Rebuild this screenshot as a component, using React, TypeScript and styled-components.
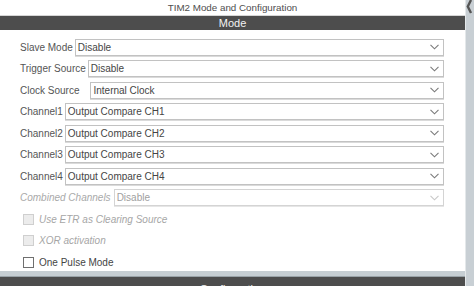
import React from "react";
import styled, { createGlobalStyle } from "styled-components";

const GlobalStyle = createGlobalStyle`
	html, body {
		margin: 0;
		padding: 0;
		height: 100%;
		overflow: hidden;
		background: #ffffff;
	}

	body {
		font-family: "Liberation Sans", Arial, sans-serif;
	}
`;

type SelectRow = {
	label: string;
	value: string;
	spacing?: number;
	disabled?: boolean;
};

type CheckRow = {
	label: string;
	disabled?: boolean;
};

const selects: SelectRow[] = [
	{ label: "Slave Mode", value: "Disable" },
	{ label: "Trigger Source", value: "Disable" },
	{ label: "Clock Source", value: "Internal Clock", spacing: 11 },
	{ label: "Channel1", value: "Output Compare CH1" },
	{ label: "Channel2", value: "Output Compare CH2" },
	{ label: "Channel3", value: "Output Compare CH3" },
	{ label: "Channel4", value: "Output Compare CH4" },
	{ label: "Combined Channels", value: "Disable", spacing: 3, disabled: true },
];

const checks: CheckRow[] = [
	{ label: "Use ETR as Clearing Source", disabled: true },
	{ label: "XOR activation", disabled: true },
	{ label: "One Pulse Mode" },
];

const Chevron = ({ light }: { light?: boolean }) => (
	<svg width="9" height="6" viewBox="0 0 9 6">
		<polyline
			points="0.5,0.8 4.5,4.8 8.5,0.8"
			fill="none"
			stroke={light ? "#c8c8c8" : "#7a7a7a"}
			strokeWidth="1.1"
		/>
	</svg>
);

const App = () => {
	return (
		<Screen>
			<GlobalStyle />
			<Panel>
				<Title>TIM2 Mode and Configuration</Title>
				<SectionBar>Mode</SectionBar>

				<Content>
					{selects.map((row) => (
						<Row key={row.label}>
							<Label $disabled={row.disabled} $spacing={row.spacing}>
								{row.label}
							</Label>
							<Select $disabled={row.disabled}>
								<span>{row.value}</span>
								<Chevron light={row.disabled} />
							</Select>
						</Row>
					))}

					{checks.map((row) => (
						<Row key={row.label}>
							<Check $disabled={row.disabled}>
								<Box $disabled={row.disabled} />
								<span>{row.label}</span>
							</Check>
						</Row>
					))}
				</Content>

				<Band />
				<SectionBar $bottom>Configuration</SectionBar>
			</Panel>

			<Splitter>
				<svg width="8" height="16" viewBox="0 0 8 16">
					<polyline
						points="5,0 1.8,6.5 5,13"
						fill="none"
						stroke="#555"
						strokeWidth="2.4"
					/>
				</svg>
			</Splitter>
		</Screen>
	);
};

const Screen = styled.div`
	display: flex;
	width: 474px;
	height: 286px;
	overflow: hidden;
`;

const Panel = styled.div`
	width: 466px;
	display: flex;
	flex-direction: column;
	background: #ffffff;
`;

const Title = styled.div`
	height: 16px;
	line-height: 15px;
	text-align: center;
	font-size: 9.8px;
	color: #4e4e4e;
`;

const SectionBar = styled.div<{ $bottom?: boolean }>`
	flex-shrink: 0;
	height: 14px;
	line-height: 14px;
	border-top: 1px solid ${({ $bottom }) => ($bottom ? "#9aa3a8" : "#d6d6d6")};
	background: #4d4d4d;
	color: #f2f2f2;
	font-size: 11px;
	text-align: center;
	padding-top: ${({ $bottom }) => ($bottom ? "5px" : "0")};
`;

const Content = styled.div`
	flex-shrink: 0;
	height: 241px;
	box-sizing: border-box;
	padding: 6.5px 21px 0 20px;
	display: flex;
	flex-direction: column;
`;

const Row = styled.div`
	flex-shrink: 0;
	height: 21.5px;
	display: flex;
	align-items: center;
`;

const Label = styled.span<{ $disabled?: boolean; $spacing?: number }>`
	font-size: 10px;
	white-space: nowrap;
	color: ${({ $disabled }) => ($disabled ? "#a9a9a9" : "#555555")};
	font-style: ${({ $disabled }) => ($disabled ? "italic" : "normal")};
	margin-right: ${({ $spacing }) => $spacing ?? 2}px;
`;

const Select = styled.div<{ $disabled?: boolean }>`
	flex: 1;
	height: 15px;
	display: flex;
	align-items: center;
	justify-content: space-between;
	padding: 0 4px 0 2px;
	border: 1px solid ${({ $disabled }) => ($disabled ? "#d4d4d4" : "#c2c2c2")};
	box-shadow: 0 1px 0 ${({ $disabled }) => ($disabled ? "#e6e6e6" : "#dadada")};
	background: #ffffff;
	font-size: 10px;
	color: ${({ $disabled }) => ($disabled ? "#a0a0a0" : "#454545")};

	span {
		white-space: nowrap;
	}
`;

const Check = styled.label<{ $disabled?: boolean }>`
	display: flex;
	align-items: center;
	gap: 5px;
	padding-left: 3px;
	font-size: 10px;
	color: ${({ $disabled }) => ($disabled ? "#a6a6a6" : "#454545")};
	font-style: ${({ $disabled }) => ($disabled ? "italic" : "normal")};
`;

const Box = styled.span<{ $disabled?: boolean }>`
	width: 9px;
	height: 9px;
	border: 1px solid ${({ $disabled }) => ($disabled ? "#cfcfcf" : "#6f6f6f")};
	background: ${({ $disabled }) => ($disabled ? "#ececec" : "#ffffff")};
`;

const Band = styled.div`
	position: relative;
	flex-shrink: 0;
	height: 5px;
	background: #c6ced3;
`;

const Splitter = styled.div`
	flex: 1;
	background: #c8cfd4;
	border-left: 1px solid #e4e8ea;
	display: flex;
	flex-direction: column;
	align-items: flex-start;
`;

export default App;
